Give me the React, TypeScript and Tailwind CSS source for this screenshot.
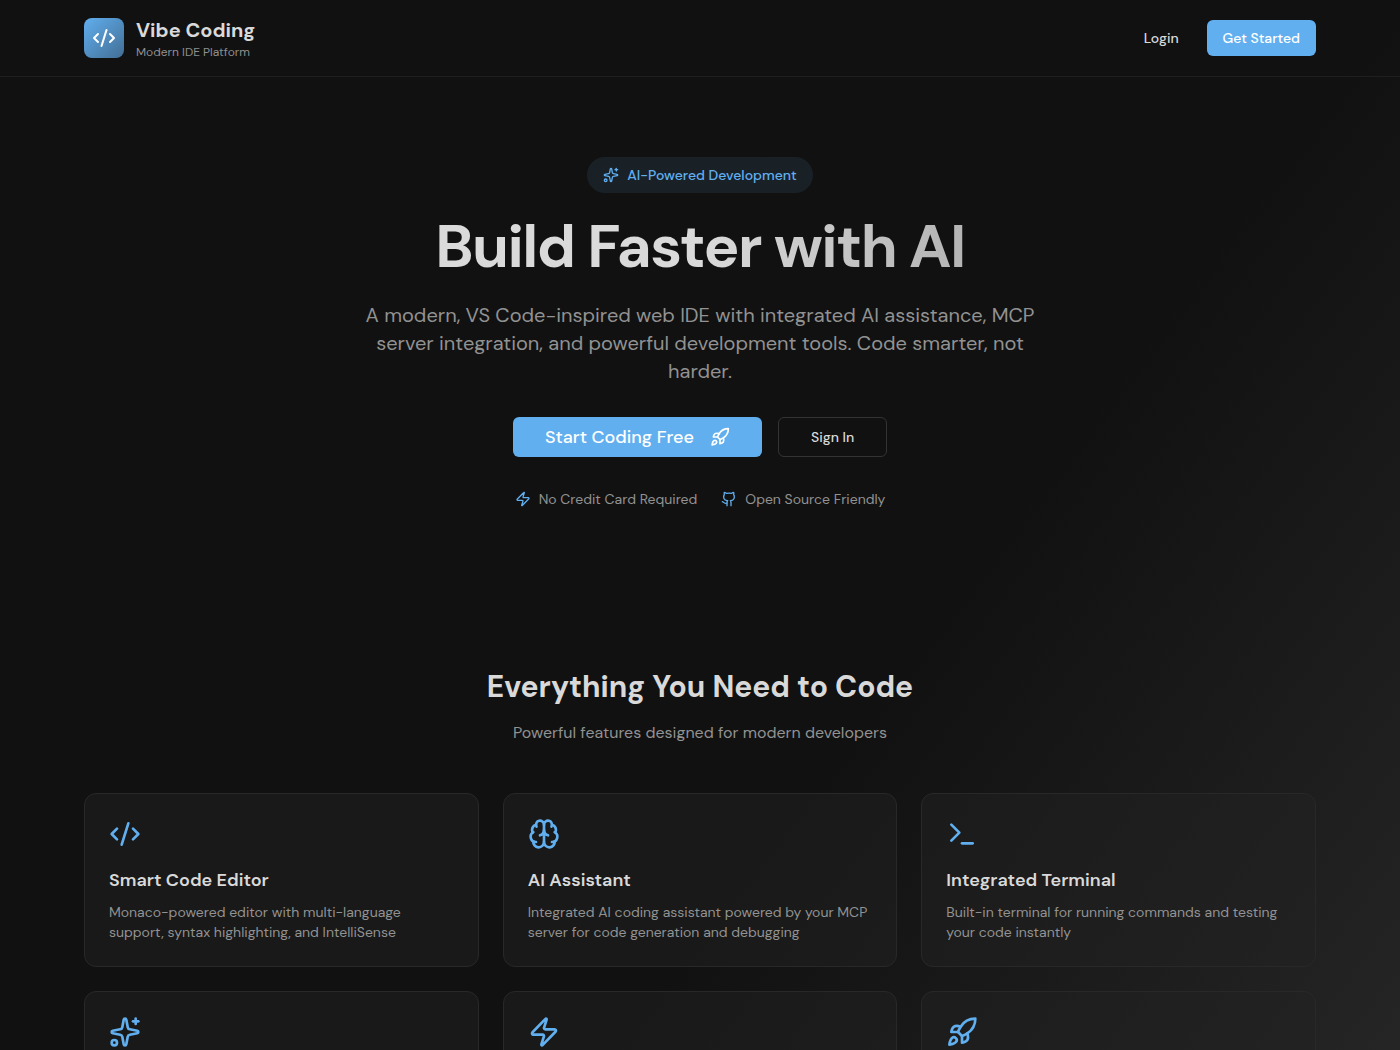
import {
  Brain,
  CodeXml,
  Github,
  Rocket,
  Sparkles,
  Terminal,
  Zap,
  type LucideIcon,
} from "lucide-react";

type Feature = { icon: LucideIcon; title?: string; lines?: string[] };

const features: Feature[] = [
  {
    icon: CodeXml,
    title: "Smart Code Editor",
    lines: ["Monaco-powered editor with multi-language", "support, syntax highlighting, and IntelliSense"],
  },
  {
    icon: Brain,
    title: "AI Assistant",
    lines: ["Integrated AI coding assistant powered by your MCP", "server for code generation and debugging"],
  },
  {
    icon: Terminal,
    title: "Integrated Terminal",
    lines: ["Built-in terminal for running commands and testing", "your code instantly"],
  },
  { icon: Sparkles },
  { icon: Zap },
  { icon: Rocket },
];

function Header() {
  return (
    <header className="border-b border-[#1f1f1f]">
      <div className="mx-auto flex max-w-7xl items-center justify-between px-6 py-4">
        <div className="flex items-center gap-3">
          <div className="flex size-10 items-center justify-center rounded-lg bg-linear-to-br from-[#61afef] to-[#426f96]">
            <CodeXml className="size-6 text-white" />
          </div>
          <div>
            <div className="text-xl font-bold text-[#d9d9d9]">Vibe Coding</div>
            <p className="text-xs text-[#8f8f8f]">Modern IDE Platform</p>
          </div>
        </div>
        <nav className="flex items-center gap-3">
          <button type="button" className="h-9 rounded-md px-4 text-sm font-medium">
            Login
          </button>
          <button type="button" className="h-9 rounded-md bg-[#61afef] px-4 text-sm font-medium text-white">
            Get Started
          </button>
        </nav>
      </div>
    </header>
  );
}

function Hero() {
  return (
    <section className="mx-auto flex max-w-7xl flex-col items-center px-6 py-20 text-center">
      <div className="mb-6 flex items-center gap-2 rounded-full bg-[#61afef]/10 px-4 py-2 text-sm font-medium text-[#61afef]">
        <Sparkles className="size-4" />
        <span>AI-Powered Development</span>
      </div>
      <h1 className="mb-6 bg-linear-to-r from-[#dadada] from-50% to-[#b4b4b4] bg-clip-text text-6xl leading-none font-bold tracking-tight text-transparent">
        Build Faster with AI
      </h1>
      <p className="mb-8 text-xl text-[#929292]">
        <span className="block">A modern, VS Code-inspired web IDE with integrated AI assistance, MCP</span>
        <span className="block">server integration, and powerful development tools. Code smarter, not</span>
        <span className="block">harder.</span>
      </p>
      <div className="mb-8 flex items-center gap-4">
        <button
          type="button"
          className="flex h-10 items-center gap-4 rounded-md bg-[#61afef] px-8 text-lg font-medium text-white"
        >
          Start Coding Free
          <Rocket className="size-5" />
        </button>
        <button type="button" className="h-10 rounded-md border border-[#333] px-8 text-sm font-medium">
          Sign In
        </button>
      </div>
      <ul className="flex items-center gap-6 text-sm text-[#929292]">
        <li className="flex items-center gap-2">
          <Zap className="size-4 text-[#61afef]" />
          No Credit Card Required
        </li>
        <li className="flex items-center gap-2">
          <Github className="size-4 text-[#61afef]" />
          Open Source Friendly
        </li>
      </ul>
    </section>
  );
}

function FeatureCard({ icon: Icon, title, lines }: Feature) {
  return (
    <article className="rounded-xl border border-[#282828] bg-[#212121]/50 p-6">
      <Icon className="mb-4 size-8 text-[#61afef]" />
      {title && <h3 className="mb-2 text-lg font-semibold">{title}</h3>}
      {lines && (
        <p className="text-sm text-[#929292]">
          {lines.map((line) => (
            <span key={line} className="block">
              {line}
            </span>
          ))}
        </p>
      )}
    </article>
  );
}

export default function App() {
  return (
    <div className="min-h-screen bg-[#111] bg-linear-to-br from-[#111] via-[#111] to-[#363636] bg-[length:100%_1860px] bg-no-repeat font-['DM_Sans',Inter,sans-serif] text-[#d9d9d9]">
      <Header />
      <main>
        <Hero />
        <section className="mx-auto max-w-7xl px-6 py-20">
          <div className="mb-12 text-center">
            <h2 className="mb-4 text-3xl font-bold">Everything You Need to Code</h2>
            <p className="text-base text-[#929292]">Powerful features designed for modern developers</p>
          </div>
          <div className="grid auto-rows-fr gap-6 md:grid-cols-3">
            {features.map((feature, index) => (
              <FeatureCard key={index} {...feature} />
            ))}
          </div>
        </section>
      </main>
    </div>
  );
}
